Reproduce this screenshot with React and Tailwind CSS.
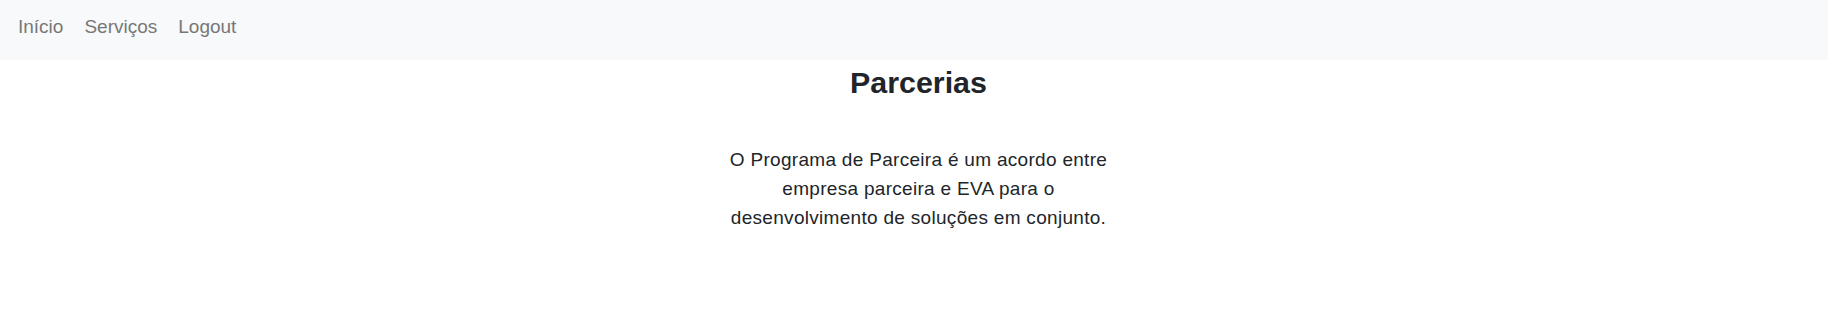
export default function App() {
  return (
    <div className="min-h-[325px] bg-white text-[#212529] font-['Liberation_Sans',Arial,sans-serif]">
      {/* Top bar */}
      <nav className="h-[60px] bg-[#f8f9fa] pl-[18px] pt-[12.5px]">
        <ul className="flex gap-[21px] text-[19px] leading-[28.5px] text-[#777777]">
          <li>Início</li>
          <li>Serviços</li>
          <li>Logout</li>
        </ul>
      </nav>

      <main className="flex flex-col items-center pl-[9px]">
        <h2 className="mt-[3.5px] text-[30.4px] font-bold leading-[36.5px]">Parcerias</h2>
        <p className="mt-[44.5px] text-center text-[19px] leading-[29px] tracking-[0.3px]">
          O Programa de Parceira é um acordo entre
          <br />
          empresa parceira e EVA para o
          <br />
          desenvolvimento de soluções em conjunto.
        </p>
      </main>
    </div>
  )
}
